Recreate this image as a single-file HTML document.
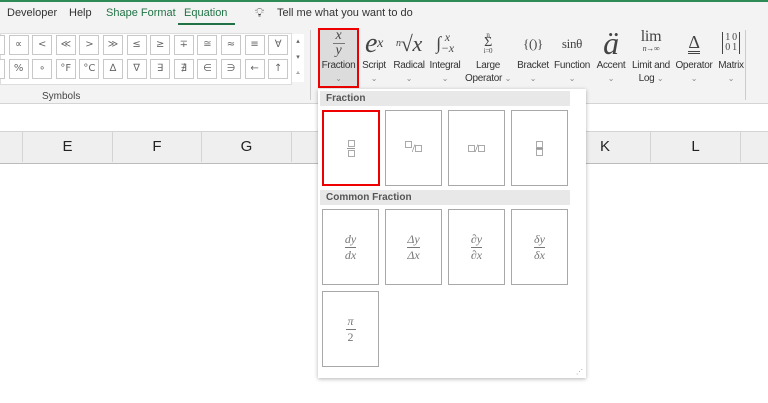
<!DOCTYPE html><html><head><style>
body{margin:0;width:768px;height:403px;overflow:hidden;background:#fff;font-family:"Liberation Sans",sans-serif;position:relative}
.a{position:absolute}
.tab{position:absolute;top:7px;font-size:11px;color:#333}
.cell{position:absolute;width:18px;height:18px;border:1px solid #c8c8c8;background:#fff;font-size:10px;color:#666;text-align:center;line-height:18px;font-family:"DejaVu Sans",sans-serif}
.btn{position:absolute;top:28px;text-align:center;font-size:10px;letter-spacing:-0.3px;color:#333;line-height:13px;white-space:nowrap}
.ic{font-family:"Liberation Serif",serif;color:#444;height:30px;display:flex;align-items:center;justify-content:center;margin-bottom:1px}
.chev{font-size:8px;color:#888}
.hdr{position:absolute;top:131px;height:31px;line-height:31px;font-size:15px;color:#222;text-align:center;border-right:1px solid #d4d4d4}
.tile{position:absolute;width:55px;height:74px;border:1px solid #a8a8a8;background:#fff;display:flex;align-items:center;justify-content:center;font-family:"Liberation Serif",serif;font-style:italic;color:#777;font-size:12px}
.fr{display:flex;flex-direction:column;align-items:center;line-height:13px}
.fr .l{border-top:1px solid #777;width:100%;margin:1px 0}
.sec{position:absolute;left:320px;width:250px;height:15px;background:#e8e8e8;font-size:10px;font-weight:bold;color:#555;line-height:15px;padding-left:6px;box-sizing:border-box}
.sq{display:inline-block;width:5px;height:5px;border:1px solid #aaa}
</style></head><body>
<div class="a" style="left:0;top:0;width:768px;height:2px;background:#2e8b57"></div>
<div class="a" style="left:0;top:2px;width:768px;height:102px;background:#f3f3f3"></div>
<div class="tab" style="left:7px">Developer</div>
<div class="tab" style="left:69px">Help</div>
<div class="tab" style="left:106px;color:#217346">Shape Format</div>
<div class="tab" style="left:184px;color:#217346">Equation</div>
<div class="a" style="left:178px;top:23px;width:57px;height:2px;background:#217346"></div>
<div class="tab" style="left:255px;font-size:13px;top:5px">&#x1F4A1;&#xFE0E;</div>
<div class="tab" style="left:277px">Tell me what you want to do</div>
<div class="a" style="left:0;top:33px;width:290px;height:50px;background:#fff;border:1px solid #ddd"></div>
<div id="cells"></div>
<div class="a" style="left:291px;top:34px;width:12px;height:48px;background:#fff;border-left:1px solid #ddd;font-size:7px;color:#666;text-align:center;line-height:16px">▴<br>▾<br>⩡</div>
<div class="a" style="left:42px;top:91px;font-size:10px;color:#444">Symbols</div>
<div class="a" style="left:310px;top:30px;width:1px;height:70px;background:#ccc"></div>
<div class="a" style="left:745px;top:30px;width:1px;height:70px;background:#ccc"></div>
<div class="a" style="left:318px;top:28px;width:37px;height:56px;background:#dcdcdc;border:2px solid #e00"></div>
<div class="btn" style="left:318px;width:41px"><div class="ic"><div class="fr" style="font-style:italic;font-size:14px;line-height:12px"><span>x</span><span class="l" style="width:12px"></span><span>y</span></div></div>Fraction<br><span class="chev">⌄</span></div>
<div class="btn" style="left:357px;width:34px"><div class="ic" style="font-size:28px;font-style:italic">e<sup style="font-size:14px">x</sup></div>Script<br><span class="chev">⌄</span></div>
<div class="btn" style="left:391px;width:36px"><div class="ic" style="font-size:22px"><sup style="font-size:10px;font-style:italic">n</sup>√<i>x</i></div>Radical<br><span class="chev">⌄</span></div>
<div class="btn" style="left:427px;width:36px"><div class="ic" style="font-size:18px">∫<span style="font-size:12px;font-style:italic;line-height:11px;display:inline-block">x<br>−x</span></div>Integral<br><span class="chev">⌄</span></div>
<div class="btn" style="left:462px;width:52px"><div class="ic" style="font-size:14px;line-height:8px;flex-direction:column"><span style="font-size:7px">n</span>Σ<span style="font-size:7px">i=0</span></div>Large<br>Operator <span class="chev">⌄</span></div>
<div class="btn" style="left:516px;width:34px"><div class="ic" style="font-size:13px">{()}</div>Bracket<br><span class="chev">⌄</span></div>
<div class="btn" style="left:552px;width:40px"><div class="ic" style="font-size:13px">sinθ</div>Function<br><span class="chev">⌄</span></div>
<div class="btn" style="left:594px;width:34px"><div class="ic" style="font-size:32px;font-style:italic">ä</div>Accent<br><span class="chev">⌄</span></div>
<div class="btn" style="left:628px;width:46px"><div class="ic" style="font-size:16px;flex-direction:column;line-height:12px">lim<span style="font-size:8px;font-style:italic">n→∞</span></div>Limit and<br>Log <span class="chev">⌄</span></div>
<div class="btn" style="left:674px;width:40px"><div class="ic" style="font-size:18px"><span style="border-bottom:3px double #444;line-height:18px">Δ</span></div>Operator<br><span class="chev">⌄</span></div>
<div class="btn" style="left:716px;width:30px"><div class="ic" style="font-size:10px;line-height:10px"><span style="border:1px solid #444;border-top:none;border-bottom:none;padding:1px 2px">1 0<br>0 1</span></div>Matrix<br><span class="chev">⌄</span></div>
<div class="a" style="left:0;top:103px;width:768px;height:1px;background:#d4d4d4"></div>
<div class="a" style="left:0;top:131px;width:768px;height:31px;background:#efefef;border-top:1px solid #d4d4d4;border-bottom:1px solid #bbb"></div>
<div class="hdr" style="left:0;width:22px"></div>
<div class="hdr" style="left:23px;width:89px">E</div>
<div class="hdr" style="left:113px;width:88px">F</div>
<div class="hdr" style="left:202px;width:89px">G</div>
<div class="hdr" style="left:560px;width:90px">K</div>
<div class="hdr" style="left:651px;width:89px">L</div>
<div class="a" style="left:318px;top:89px;width:268px;height:289px;background:#fff;box-shadow:0 1px 4px rgba(0,0,0,.3)"></div>
<div class="sec" style="top:91px">Fraction</div>
<div class="tile" style="left:322px;top:110px;border:2px solid #e00;width:54px;height:72px"><div class="fr" style="line-height:10px"><span class="sq"></span><span class="l" style="width:8px;border-color:#999"></span><span class="sq"></span></div></div>
<div class="tile" style="left:385px;top:110px"><span style="font-style:normal;font-size:12px"><span class="sq" style="vertical-align:4px"></span>/<span class="sq"></span></span></div>
<div class="tile" style="left:448px;top:110px"><span style="font-style:normal"><span class="sq"></span>/<span class="sq"></span></span></div>
<div class="tile" style="left:511px;top:110px"><div class="fr" style="line-height:7px"><span class="sq" style="width:5px;height:5px"></span><span class="l" style="width:7px;border-color:#999;margin:0"></span><span class="sq" style="width:5px;height:5px"></span></div></div>
<div class="sec" style="top:190px">Common Fraction</div>
<div class="tile" style="left:322px;top:209px"><div class="fr"><span>dy</span><span class="l"></span><span>dx</span></div></div>
<div class="tile" style="left:385px;top:209px"><div class="fr"><span>Δy</span><span class="l"></span><span>Δx</span></div></div>
<div class="tile" style="left:448px;top:209px"><div class="fr"><span>∂y</span><span class="l"></span><span>∂x</span></div></div>
<div class="tile" style="left:511px;top:209px"><div class="fr"><span>δy</span><span class="l"></span><span>δx</span></div></div>
<div class="tile" style="left:322px;top:291px"><div class="fr"><span>π</span><span class="l" style="width:10px"></span><span style="font-style:normal">2</span></div></div>
<div class="a" style="left:576px;top:368px;font-size:7px;color:#999">⋰</div>
<script>
var r1=["","∝","<","≪",">","≫","≤","≥","∓","≅","≈","≡","∀"],r2=["","%","∘","°F","°C","∆","∇","∃","∄","∈","∋","←","↑"],h="";
for(var i=0;i<13;i++){var x=-15+i*23.6;h+='<div class="cell" style="left:'+x+'px;top:35px">'+r1[i]+'</div><div class="cell" style="left:'+x+'px;top:59px">'+r2[i]+'</div>';}
document.getElementById("cells").innerHTML=h;
</script>
</body></html>
